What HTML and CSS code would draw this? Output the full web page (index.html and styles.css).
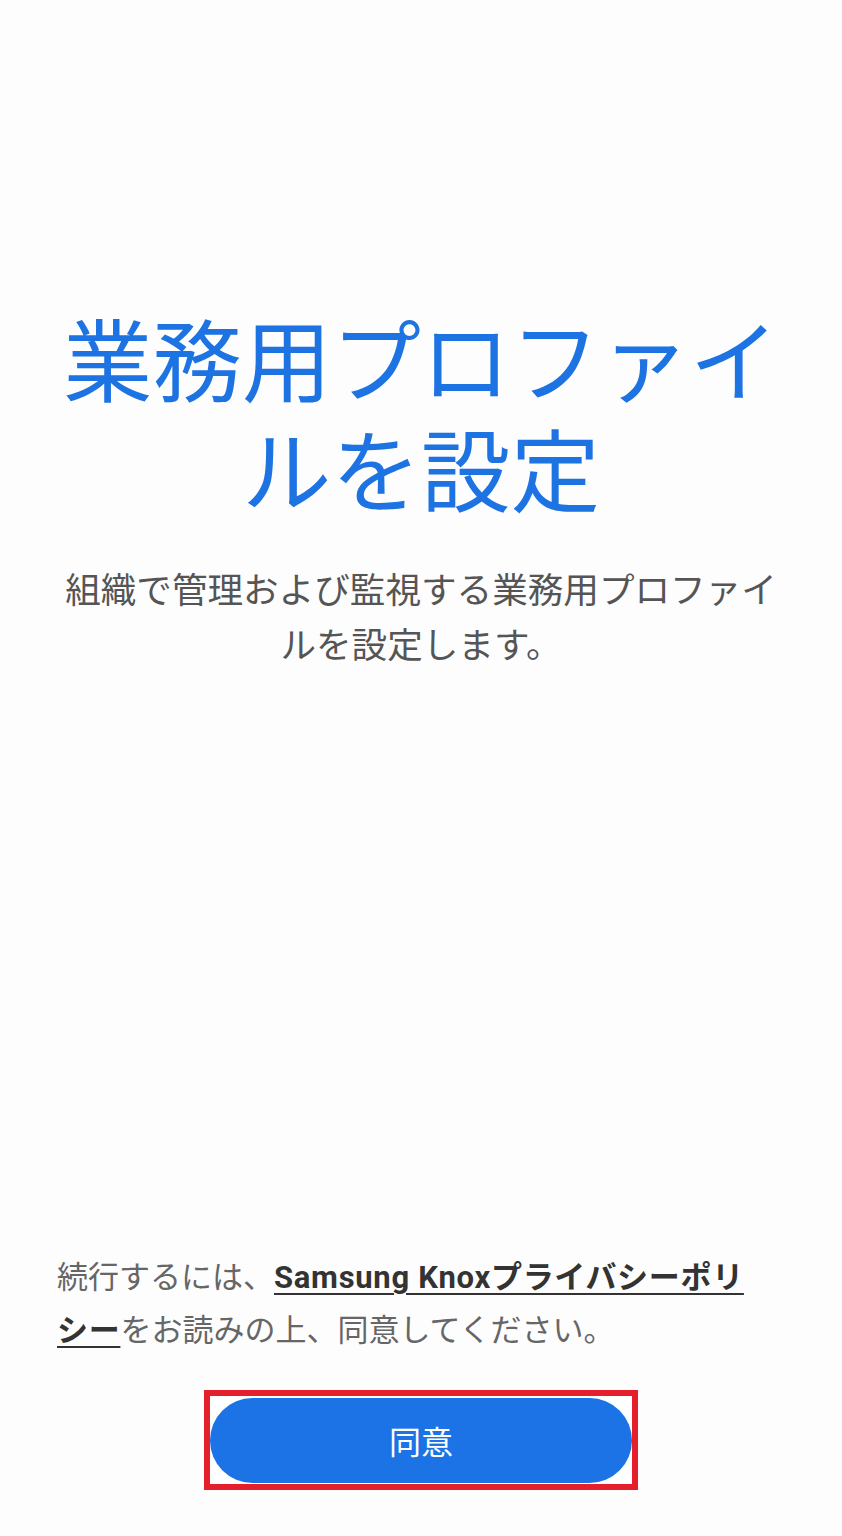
FILE: index.html
```html
<!DOCTYPE html>
<html lang="ja">
<head>
<meta charset="utf-8">
<title>業務用プロファイルを設定</title>
<link rel="stylesheet" href="styles.css">
</head>
<body>
<div class="page">
  <main class="main">
    <h1 class="title">業務用プロファイルを設定</h1>
    <p class="subtitle">組織で管理および監視する業務用プロファイルを設定します。</p>
  </main>
  <footer class="footer">
    <p class="notice">続行するには、<a class="link" href="#">Samsung Knoxプライバシーポリシー</a>をお読みの上、同意してください。</p>
    <div class="frame">
      <button class="agree" type="button">同意</button>
    </div>
  </footer>
</div>
</body>
</html>
```
FILE: styles.css
```css
html, body {
  margin: 0;
  padding: 0;
  background: #fdfdfd;
}
body {
  font-family: "Noto Sans CJK JP", "Noto Sans", sans-serif;
}
.page {
  height: 1536px;
  display: flex;
  flex-direction: column;
  box-sizing: border-box;
}
.main {
  flex: 1;
  padding: 301px 55px 0;
  display: flex;
  flex-direction: column;
  align-items: center;
}
.title {
  margin: 0;
  font-size: 89.5px;
  line-height: 110px;
  font-weight: 400;
  color: #1e73e3;
  text-align: center;
}
.subtitle {
  margin: 39px 0 0;
  font-size: 35.6px;
  line-height: 55px;
  color: #555555;
  text-align: center;
}
.footer {
  padding: 0 0 46px;
  display: flex;
  flex-direction: column;
  align-items: center;
}
.notice {
  margin: 0;
  align-self: stretch;
  padding: 0 82px 0 57px;
  font-size: 31px;
  line-height: 50px;
  color: #666666;
}
.link {
  font-family: "Roboto", "Noto Sans CJK JP", sans-serif;
  font-weight: 700;
  color: #333333;
  letter-spacing: 0.7px;
  text-decoration: underline;
  text-decoration-thickness: 2px;
  text-underline-offset: 5px;
}
.frame {
  margin-top: 34px;
  width: 434px;
  height: 100px;
  box-sizing: border-box;
  border: 6px solid #e3202b;
  background: #ffffff;
  display: flex;
  align-items: center;
  justify-content: center;
}
.agree {
  width: 422px;
  height: 85px;
  border: none;
  border-radius: 43px;
  background: #1c73e6;
  color: #ffffff;
  font-family: "Noto Sans CJK JP", sans-serif;
  font-size: 32px;
  padding: 0;
}
```
